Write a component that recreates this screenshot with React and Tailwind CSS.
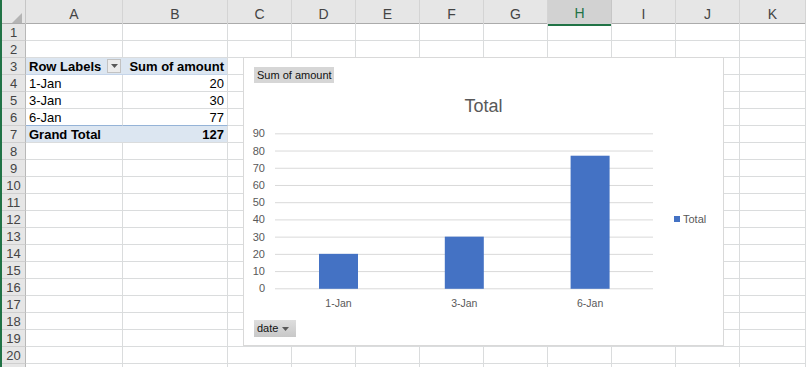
import React from 'react';

const COLS = ['A', 'B', 'C', 'D', 'E', 'F', 'G', 'H', 'I', 'J', 'K'];
const ROWS = Array.from({ length: 21 }, (_, i) => i + 1);

const pivot = {
  3: { a: 'Row Labels', b: 'Sum of amount', kind: 'head' },
  4: { a: '1-Jan', b: '20' },
  5: { a: '3-Jan', b: '30' },
  6: { a: '6-Jan', b: '77', kind: 'last' },
  7: { a: 'Grand Total', b: '127', kind: 'total' },
};

const data = [
  { label: '1-Jan', value: 20 },
  { label: '3-Jan', value: 30 },
  { label: '6-Jan', value: 77 },
];

const Caret = () => (
  <svg width="7" height="4" viewBox="0 0 7 4">
    <path d="M0 0h7L3.5 4z" fill="#595959" />
  </svg>
);

const Chart = () => {
  const y = (v) => 171.3 - v * 1.722;
  const ticks = [90, 80, 70, 60, 50, 40, 30, 20, 10, 0];
  return (
    <div className="absolute left-[241px] top-[57px] w-[481px] h-[289px] border border-[#d9d9d9] bg-white flex flex-col">
      <div className="ml-[10px] mt-[9px] w-[80px] h-[16px] bg-[#d6d6d6] text-[11px] leading-[16px] pl-[3px] text-[#111]">
        Sum of amount
      </div>
      <div className="mt-[11px] h-[24px] text-center text-[18px] leading-[24px] text-[#595959]">Total</div>
      <svg width="479" height="195" className="block -mt-[1px]" fontFamily="Liberation Sans, sans-serif">
        {ticks.map((t) => (
          <g key={t}>
            <line x1="31" x2="409" y1={y(t) + 0.5} y2={y(t) + 0.5} stroke="#d9d9d9" />
            <text x="21" y={y(t) + 4} textAnchor="end" fontSize="11" fill="#595959">
              {t}
            </text>
          </g>
        ))}
        {data.map((d, i) => {
          const cx = 94.5 + i * 125.8;
          return (
            <g key={d.label}>
              <rect x={cx - 19.5} y={y(d.value)} width="39" height={y(0) - y(d.value) + 0.5} fill="#4472c4" />
              <text x={cx} y="190" textAnchor="middle" fontSize="10.5" fill="#595959">
                {d.label}
              </text>
            </g>
          );
        })}
        <rect x="430" y="99" width="6" height="6" fill="#4472c4" />
        <text x="439" y="106" fontSize="11" fill="#595959">Total</text>
      </svg>
      <div className="ml-[10px] mt-[8px] w-[42px] h-[17px] bg-gradient-to-b from-[#dedede] to-[#c8c8c8] flex items-center gap-[4px] pl-[3px] text-[11px] text-[#111]">
        date <Caret />
      </div>
    </div>
  );
};

export default function App() {
  return (
    <div className="w-[806px] h-[367px] overflow-hidden bg-white border-l-2 border-[#217346] font-['Liberation_Sans',Arial,sans-serif] text-[13px] text-black">
      <div className="relative">
        {/* column header */}
        <div className="grid grid-cols-[24px_97px_105px_repeat(8,64px)_66px] h-[24px] bg-[#e6e6e6] border-b border-[#ababab]">
          <div className="border-r border-[#c6c6c6] flex items-end justify-end pr-[3px] pb-[3px]">
            <svg width="10" height="10" viewBox="0 0 10 10">
              <path d="M10 0V10H0z" fill="#b4b4b4" />
            </svg>
          </div>
          {COLS.map((c) => (
            <div
              key={c}
              className={
                c === 'H'
                  ? 'bg-[#d2d2d2] border-r border-[#c6c6c6] border-b-2 border-b-[#217346] flex items-center justify-center pt-[3px] text-[14px] text-[#217346]'
                  : 'border-r border-[#d4d4d4] flex items-center justify-center pt-[3px] text-[14px] text-[#444]'
              }
            >
              {c}
            </div>
          ))}
        </div>

        {/* rows */}
        {ROWS.map((r) => {
          const p = pivot[r];
          const blue = p && (p.kind === 'head' || p.kind === 'total');
          const bold = blue ? 'font-bold' : '';
          const bb = p?.kind === 'head' ? 'border-b-[#c5d5ea]' : p?.kind === 'last' ? 'border-b-[#95b3d7]' : 'border-b-[#dadcdd]';
          return (
            <div key={r} className="grid grid-cols-[24px_97px_105px_repeat(8,64px)_66px] h-[17px]">
              <div className="bg-[#e6e6e6] border-r border-b border-r-[#b8b8b8] border-b-[#cfcfcf] flex items-center justify-center text-[13px] leading-none text-[#444]">
                {r <= 20 ? r : ''}
              </div>
              <div
                className={`border-b ${bb} ${blue ? 'bg-[#dce6f1]' : 'border-r border-r-[#dadcdd]'} ${bold} flex items-center justify-between pl-[3px] leading-none`}
              >
                <span>{p?.a}</span>
                {p?.kind === 'head' && (
                  <span className="mr-[2px] w-[14px] h-[14px] bg-[#ececec] border border-[#c2c2c2] flex items-center justify-center">
                    <Caret />
                  </span>
                )}
              </div>
              <div
                className={`border-b border-r border-r-[#dadcdd] ${bb} ${blue ? 'bg-[#dce6f1]' : ''} ${bold} flex items-center justify-end pr-[3px] leading-none`}
              >
                {p?.b}
              </div>
              {COLS.slice(2).map((c) => (
                <div key={c} className="border-r border-b border-[#dadcdd]" />
              ))}
            </div>
          );
        })}

        <Chart />
      </div>
    </div>
  );
}
